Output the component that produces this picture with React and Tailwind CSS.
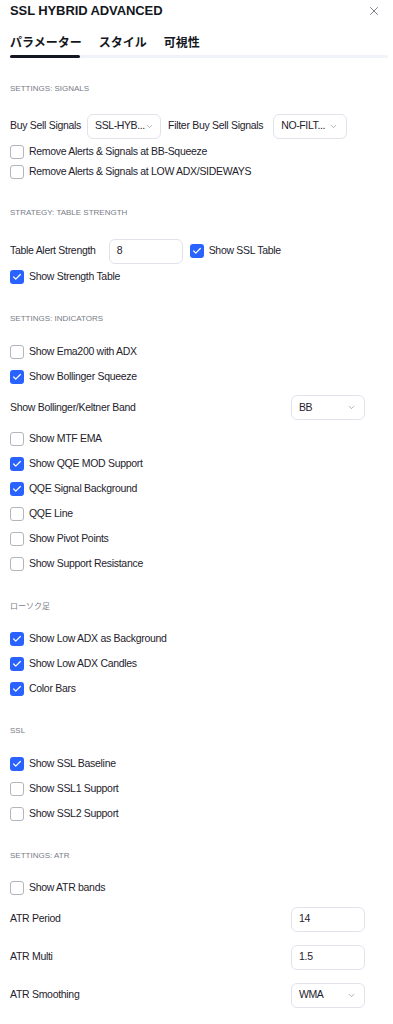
import { Check, ChevronDown, X } from 'lucide-react';

const font = { fontFamily: '"Liberation Sans", "Noto Sans CJK JP", sans-serif' };

function Box({ checked }) {
    return checked ? (
        <span className="w-[14px] h-[14px] rounded-[3px] bg-[#2962ff] flex items-center justify-center shrink-0">
            <Check size={10} strokeWidth={3} className="text-white" />
        </span>
    ) : (
        <span className="w-[14px] h-[14px] rounded-[3px] border border-[#b2b5be] bg-white shrink-0" />
    );
}

function CheckRow({ label, checked, h = 'h-[25px]' }) {
    return (
        <div className={`${h} flex items-center gap-[5px]`}>
            <Box checked={checked} />
            <span>{label}</span>
        </div>
    );
}

function Select({ value, className = '' }) {
    return (
        <div className={`w-[74px] h-[25px] border border-[#e0e3eb] rounded-[6px] flex items-center justify-between pl-[7px] pr-[8px] bg-white shrink-0 ${className}`}>
            <span className="tracking-[-0.4px]">{value}</span>
            <ChevronDown size={9} strokeWidth={1.5} className="text-[#787b86] shrink-0" />
        </div>
    );
}

function Input({ value, className = '' }) {
    return (
        <div className={`w-[74px] h-[25px] border border-[#e0e3eb] rounded-[6px] flex items-center pl-[7px] bg-white shrink-0 ${className}`}>
            {value}
        </div>
    );
}

function Section({ title, mt = 'mt-[20px]' }) {
    return (
        <div className={`${mt} h-[20px] flex items-center text-[8px] tracking-normal text-[#787b86]`}>{title}</div>
    );
}

export default function App() {
    return (
        <div className="w-[393px] bg-white text-[#1e222d] text-[10.5px] tracking-[-0.3px] px-[10px] whitespace-nowrap" style={font}>
            {/* header */}
            <div className="h-[21px] flex items-center justify-between">
                <h1 className="text-[13px] font-bold leading-none tracking-[-0.1px] text-[#131722]">SSL HYBRID ADVANCED</h1>
                <X size={14} strokeWidth={1.2} className="text-[#4a4d57] mr-[2px]" />
            </div>
            <div className="pt-[14px] pb-[4px] flex gap-[17px] text-[12px] font-bold leading-[16px] tracking-normal text-[#131722]">
                <span>パラメーター</span>
                <span>スタイル</span>
                <span>可視性</span>
            </div>
            <div className="h-[3px] bg-[#f0f3fa] rounded-full mr-[-5px]">
                <div className="w-[70px] h-[3px] bg-[#131722] rounded-full" />
            </div>

            <Section title="SETTINGS: SIGNALS" mt="mt-[21px]" />
            <div className="mt-[14px] h-[26px] flex items-center">
                <span>Buy Sell Signals</span>
                <Select value="SSL-HYB..." className="ml-[6px]" />
                <span className="ml-[7px]">Filter Buy Sell Signals</span>
                <Select value="NO-FILT..." className="ml-[10px]" />
            </div>
            <div className="mt-[3px]">
                <CheckRow h="h-[20px]" label="Remove Alerts & Signals at BB-Squeeze" />
                <CheckRow h="h-[20px]" label="Remove Alerts & Signals at LOW ADX/SIDEWAYS" />
            </div>

            <Section title="STRATEGY: TABLE STRENGTH" mt="mt-[21px]" />
            <div className="mt-[15px] h-[26px] flex items-center">
                <span>Table Alert Strength</span>
                <Input value="8" className="ml-[13px]" />
                <span className="ml-[7px]"><Box checked /></span>
                <span className="ml-[5px]">Show SSL Table</span>
            </div>
            <CheckRow h="h-[26px]" label="Show Strength Table" checked />

            <Section title="SETTINGS: INDICATORS" mt="mt-[19px]" />
            <div className="mt-[10px]">
                <CheckRow label="Show Ema200 with ADX" />
                <CheckRow label="Show Bollinger Squeeze" checked />
                <div className="h-[37px] flex items-center justify-between pr-[18px]">
                    <span>Show Bollinger/Keltner Band</span>
                    <Select value="BB" />
                </div>
                <CheckRow label="Show MTF EMA" />
                <CheckRow label="Show QQE MOD Support" checked />
                <CheckRow label="QQE Signal Background" checked />
                <CheckRow label="QQE Line" />
                <CheckRow label="Show Pivot Points" />
                <CheckRow label="Show Support Resistance" />
            </div>

            <Section title="ローソク足" mt="mt-[21px]" />
            <div className="mt-[9px]">
                <CheckRow label="Show Low ADX as Background" checked />
                <CheckRow label="Show Low ADX Candles" checked />
                <CheckRow label="Color Bars" checked />
            </div>

            <Section title="SSL" mt="mt-[20px]" />
            <div className="mt-[10px]">
                <CheckRow label="Show SSL Baseline" checked />
                <CheckRow label="Show SSL1 Support" />
                <CheckRow label="Show SSL2 Support" />
            </div>

            <Section title="SETTINGS: ATR" mt="mt-[20px]" />
            <div className="mt-[9px]">
                <CheckRow label="Show ATR bands" />
                <div className="h-[38px] flex items-center justify-between pr-[18px]">
                    <span>ATR Period</span>
                    <Input value="14" />
                </div>
                <div className="h-[38px] flex items-center justify-between pr-[18px]">
                    <span>ATR Multi</span>
                    <Input value="1.5" />
                </div>
                <div className="h-[38px] flex items-center justify-between pr-[18px]">
                    <span>ATR Smoothing</span>
                    <Select value="WMA" />
                </div>
            </div>
        </div>
    );
}
